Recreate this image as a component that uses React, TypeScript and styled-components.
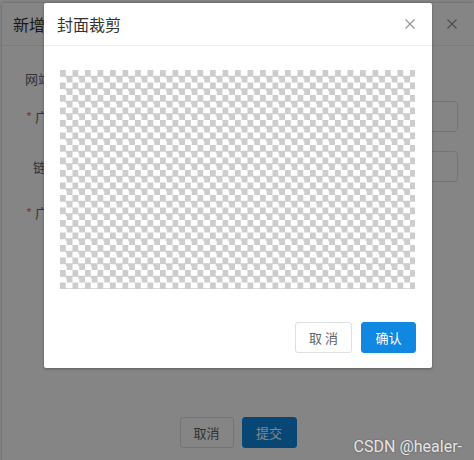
import styled, { createGlobalStyle } from 'styled-components';

const GlobalStyle = createGlobalStyle`
  html, body {
    margin: 0;
    padding: 0;
    background: #ffffff;
  }
  body {
    font-family: "Noto Sans CJK SC", "Noto Sans", sans-serif;
  }
`;

const CloseIcon = ({ color }: { color: string }) => (
  <svg width="10" height="10" viewBox="0 0 10 10">
    <path d="M0.5 0.5 L9.5 9.5 M9.5 0.5 L0.5 9.5" stroke={color} strokeWidth="1.1" fill="none" />
  </svg>
);

export default function App() {
  return (
    <>
      <GlobalStyle />
      <Page>
        <UnderDialog>
          <DialogHeader>
            <UnderTitle>新增广告</UnderTitle>
            <CloseIcon color="#909399" />
          </DialogHeader>
          <UnderBody>
            <FormRow $mt={16}>
              <FieldLabel $indent={23}>网站名称</FieldLabel>
            </FormRow>
            <FormRow $mt={6}>
              <FieldLabel $indent={24}>
                <Star>*</Star>广告名称
              </FieldLabel>
              <Field />
            </FormRow>
            <FormRow $mt={18}>
              <FieldLabel $indent={31}>链接地址</FieldLabel>
              <Field />
            </FormRow>
            <FormRow $mt={14}>
              <FieldLabel $indent={24}>
                <Star>*</Star>广告图片
              </FieldLabel>
            </FormRow>
          </UnderBody>
          <UnderFooter>
            <PlainButton $w={54}>取消</PlainButton>
            <PrimaryButton $w={55}>提交</PrimaryButton>
          </UnderFooter>
        </UnderDialog>

        <Mask />

        <ModalWrap>
          <Modal>
            <DialogHeader>
              <ModalTitle>封面裁剪</ModalTitle>
              <CloseIcon color="#909399" />
            </DialogHeader>
            <ModalBody>
              <CropArea />
            </ModalBody>
            <ModalFooter>
              <PlainButton $w={57}>取 消</PlainButton>
              <PrimaryButton $w={55}>确认</PrimaryButton>
            </ModalFooter>
          </Modal>
        </ModalWrap>

        <Watermark>CSDN @healer-</Watermark>
      </Page>
    </>
  );
}

const Page = styled.div`
  position: relative;
  width: 474px;
  height: 460px;
  overflow: hidden;
  padding: 3px 0 0 2px;
  box-sizing: border-box;
  background: #ffffff;
`;

const UnderDialog = styled.div`
  width: 472px;
  height: 470px;
  background: #ffffff;
  display: flex;
  flex-direction: column;
  box-shadow: 0 0 3px rgba(0, 0, 0, 0.3);
`;

const DialogHeader = styled.div`
  height: 42px;
  padding: 0 17px 0 11px;
  display: flex;
  align-items: center;
  justify-content: space-between;
  border-bottom: 1px solid #ebeef5;
`;

const UnderTitle = styled.div`
  font-size: 16px;
  color: #303133;
`;

const UnderBody = styled.div`
  flex: 1;
  display: flex;
  flex-direction: column;
  padding: 0 16px 0 0;
`;

const FormRow = styled.div<{ $mt: number }>`
  margin-top: ${(p) => p.$mt}px;
  height: 32px;
  display: flex;
  align-items: center;
`;

const FieldLabel = styled.div<{ $indent: number }>`
  width: 110px;
  padding-left: ${(p) => p.$indent}px;
  box-sizing: border-box;
  font-size: 13px;
  color: #606266;
  white-space: nowrap;
`;

const Star = styled.span`
  color: #f56c6c;
  margin-right: 3px;
`;

const Field = styled.div`
  flex: 1;
  height: 31px;
  border: 1px solid #dcdfe6;
  border-radius: 4px;
  box-sizing: border-box;
`;

const UnderFooter = styled.div`
  display: flex;
  justify-content: center;
  gap: 8px;
  padding-bottom: 25px;
`;

const PlainButton = styled.div<{ $w: number }>`
  width: ${(p) => p.$w}px;
  height: 31px;
  box-sizing: border-box;
  border: 1px solid #dcdfe6;
  border-radius: 3px;
  background: #ffffff;
  color: #606266;
  font-size: 13px;
  display: flex;
  align-items: center;
  justify-content: center;
`;

const PrimaryButton = styled(PlainButton)`
  border-color: #1087e0;
  background: #1087e0;
  color: #ffffff;
`;

const Mask = styled.div`
  position: absolute;
  inset: 0;
  background: rgba(0, 0, 0, 0.48);
`;

const ModalWrap = styled.div`
  position: absolute;
  inset: 0;
  padding: 3px 0 0 2px;
  display: flex;
  justify-content: center;
  align-items: flex-start;
`;

const Modal = styled.div`
  width: 388px;
  height: 365px;
  background: #ffffff;
  border-radius: 2px;
  display: flex;
  flex-direction: column;
  box-shadow: 0 1px 3px rgba(0, 0, 0, 0.3);
`;

const ModalTitle = styled.div`
  font-size: 16px;
  color: #303133;
  padding-left: 2px;
`;

const ModalBody = styled.div`
  padding: 24px 17px 0 16px;
`;

const CropArea = styled.div`
  height: 219px;
  background: repeating-conic-gradient(#ffffff 0 25%, #cdcdcd 0 50%) 0 0 / 12.5px 12.5px;
`;

const ModalFooter = styled.div`
  display: flex;
  justify-content: flex-end;
  gap: 9px;
  padding: 33px 16px 0 0;
`;

const Watermark = styled.div`
  position: absolute;
  right: 12px;
  bottom: 4px;
  font-family: Roboto, "Liberation Sans", sans-serif;
  font-size: 16px;
  color: rgba(255, 255, 255, 0.85);
  text-shadow: 0 0 2px rgba(0, 0, 0, 0.4);
`;
